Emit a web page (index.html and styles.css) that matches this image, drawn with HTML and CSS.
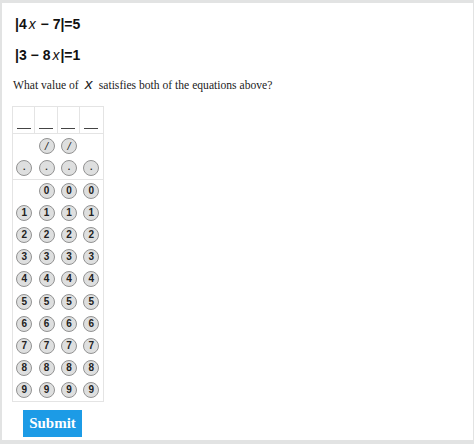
FILE: index.html
```html
<!DOCTYPE html>
<html lang="en">
<head>
  <meta charset="UTF-8" />
  <title>Grid-in Question</title>
  <link rel="stylesheet" href="styles.css">
</head>
<body>
  <div class="card">
    <div class="eq">|4<i>x</i> &minus; 7|=5</div>
    <div class="eq">|3 &minus; 8<i>x</i>|=1</div>
    <p class="question">What value of <i class="var">x</i> satisfies both of the equations above?</p>

    <div class="gridin">
      <div class="row entry">
        <div class="cell"><span class="line"></span></div>
        <div class="cell"><span class="line"></span></div>
        <div class="cell"><span class="line"></span></div>
        <div class="cell"><span class="line"></span></div>
      </div>
      <div class="section sym">
        <div class="row">
          <div class="cell"></div>
          <div class="cell"><span class="bub slash">/</span></div>
          <div class="cell"><span class="bub slash">/</span></div>
          <div class="cell"></div>
        </div>
        <div class="row">
          <div class="cell"><span class="bub dot">.</span></div>
          <div class="cell"><span class="bub dot">.</span></div>
          <div class="cell"><span class="bub dot">.</span></div>
          <div class="cell"><span class="bub dot">.</span></div>
        </div>
      </div>
      <div class="section digits" id="digits"></div>
    </div>

    <button class="submit">Submit</button>
  </div>

  <script>
    var digits = document.getElementById('digits');
    for (var d = 0; d <= 9; d++) {
      var row = document.createElement('div');
      row.className = 'row';
      for (var c = 0; c < 4; c++) {
        var cell = document.createElement('div');
        cell.className = 'cell';
        if (!(d === 0 && c === 0)) {
          var b = document.createElement('span');
          b.className = 'bub';
          b.textContent = d;
          cell.appendChild(b);
        }
        row.appendChild(cell);
      }
      digits.appendChild(row);
    }
  </script>
</body>
</html>
```

FILE: styles.css
```css
body {
  margin: 0;
  padding: 3px 1px 4px 2px;
  background: #e2e3e3;
}
.card {
  background: #fff;
  height: 437px;
  padding: 11px 0 0 10px;
  box-sizing: border-box;
}
.eq {
  font-family: "Liberation Sans", Arial, sans-serif;
  font-weight: bold;
  font-size: 14px;
  color: #111;
  margin-left: 3px;
  height: 31px;
  line-height: 20px;
}
.eq i {
  font-weight: normal;
  font-style: italic;
  margin: 0 1px 0 2px;
}
.question {
  font-family: "Liberation Serif", Georgia, serif;
  font-size: 11.6px;
  color: #222;
  margin: 0 0 12px 1px;
  line-height: 16px;
}
.question .var {
  font-family: "DejaVu Sans", sans-serif;
  font-size: 14px;
  margin: 0 3px;
}
.gridin {
  width: 89.6px;
  border: 1px solid #e4e4e4;
}
.row {
  display: flex;
}
.cell {
  width: 22.4px;
  height: 22.1px;
  display: flex;
  align-items: center;
  justify-content: center;
}
.entry {
  border-bottom: 1px solid #e4e4e4;
}
.entry .cell {
  height: 26px;
  align-items: flex-end;
  padding-bottom: 4px;
  box-sizing: border-box;
  border-right: 1px solid #e4e4e4;
}
.entry .cell:last-child {
  border-right: 0;
}
.line {
  display: block;
  width: 14px;
  height: 1px;
  background: #444;
}
.sym {
  padding-top: 1px;
  border-bottom: 1px solid #e4e4e4;
}
.sym .cell {
  height: 22px;
}
.bub {
  width: 16px;
  height: 16px;
  box-sizing: border-box;
  border-radius: 50%;
  background: #dedfdf;
  border: 1px solid #929292;
  font-family: "Liberation Sans", Arial, sans-serif;
  font-size: 10px;
  font-weight: bold;
  color: #222;
  display: flex;
  align-items: center;
  justify-content: center;
  line-height: 1;
}
.bub.slash {
  font-style: italic;
  font-weight: normal;
  font-size: 11px;
}
.bub.dot {
  align-items: flex-end;
  padding-bottom: 3px;
  font-size: 9px;
}
.submit {
  display: block;
  margin: 8px 0 0 11px;
  width: 59px;
  height: 27px;
  background: #1c9be6;
  border: 0;
  color: #fff;
  font-family: "Liberation Serif", Georgia, serif;
  font-size: 15px;
  font-weight: bold;
  padding: 0;
}
```
